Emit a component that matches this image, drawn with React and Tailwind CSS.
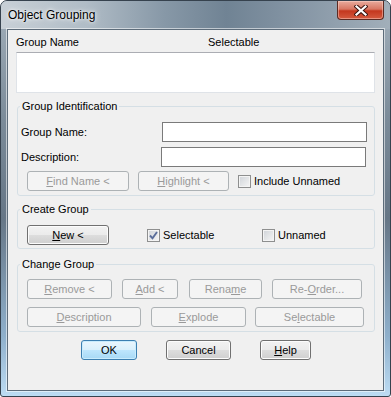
import React from "react";

function Btn({ cls, disabled, def, children }) {
  let look =
    "border-[#707070] bg-[linear-gradient(180deg,#f2f2f2_0%,#ebebeb_50%,#dddddd_51%,#cfcfcf_100%)] shadow-[inset_0_0_0_1px_#fcfcfc] text-black";
  if (disabled)
    look = "border-[#adb2b5] bg-[#f4f4f4] text-[#9a9a9a]";
  if (def)
    look =
      "border-[#3c7fb1] bg-[linear-gradient(180deg,#eaf6fd_0%,#d9f0fc_50%,#bee6fd_51%,#a7d9f5_100%)] shadow-[inset_0_0_0_1px_#c9ecfd] text-black";
  return (
    <div
      className={`h-[20px] shrink-0 rounded-[3px] border flex items-center justify-center ${look} ${cls}`}
    >
      <span>{children}</span>
    </div>
  );
}

function Check({ checked }) {
  return (
    <span className="w-[13px] h-[13px] shrink-0 border border-[#8e8f8f] bg-[linear-gradient(135deg,#cfd3d8_0%,#f6f6f6_100%)] shadow-[inset_0_0_0_1px_#f4f4f4] flex items-center justify-center">
      {checked && (
        <svg width="11" height="11" viewBox="0 0 11 11">
          <path
            d="M2 5.5 L4.5 8.3 L9 2"
            fill="none"
            stroke="#5a6d9a"
            strokeWidth="1.9"
          />
        </svg>
      )}
    </span>
  );
}

function Group({ title, cls, children }) {
  return (
    <fieldset
      className={`ml-[1px] w-[358px] border border-[#d5dfe5] rounded-[3px] ${cls}`}
    >
      <legend className="ml-[2px] px-[2px]">{title}</legend>
      {children}
    </fieldset>
  );
}

export default function App() {
  return (
    <div className="w-[391px] h-[397px] overflow-hidden rounded-t-[7px] rounded-b-[3px] border border-[#36424e] bg-[linear-gradient(180deg,#a3b0bb_0%,#7b8b99_30%,#667686_55%,#8fb0cc_85%,#bddcf3_100%)] flex flex-col font-['Liberation_Sans',Arial,sans-serif] text-[11px] leading-[13px] text-black">
      <div className="h-[28px] shrink-0 flex items-start justify-between bg-[linear-gradient(90deg,#c8d0d7_0%,#b0bcc6_22%,#8798a7_42%,#708394_58%,#8797a6_78%,#a2afba_100%)]">
        <span className="ml-[7px] mt-[7px] text-[12px] leading-[15px] [text-shadow:0_0_6px_#fff,0_0_3px_#fff]">
          Object Grouping
        </span>
        <div className="mr-[6px] w-[47px] h-[19px] border border-t-0 border-[#5c2a22] rounded-b-[4px] bg-[linear-gradient(180deg,#e8ab9d_0%,#d77763_45%,#c4371e_55%,#d45a3f_100%)] shadow-[inset_0_0_0_1px_rgba(255,220,210,0.45)] flex items-center justify-center">
          <svg width="14" height="11" viewBox="0 0 14 11">
            <path
              d="M2.5 1.5 L11.5 9.5 M11.5 1.5 L2.5 9.5"
              stroke="#3b1510"
              strokeWidth="4.2"
              strokeLinecap="square"
            />
            <path
              d="M2.5 1.5 L11.5 9.5 M11.5 1.5 L2.5 9.5"
              stroke="#ffffff"
              strokeWidth="2.2"
              strokeLinecap="square"
            />
          </svg>
        </div>
      </div>

      <div className="mx-[6px] h-[362px] shrink-0 border border-[#5d6c7a] bg-[#f0f0f0] shadow-[0_0_0_1px_rgba(255,255,255,0.55)] px-[8px] pt-[6px] flex flex-col">
        <div className="flex">
          <span className="w-[192px]">Group Name</span>
          <span>Selectable</span>
        </div>
        <div className="mt-[3px] h-[41px] w-[359px] bg-white border border-[#dfe3e8] border-t-[#abadb3]" />

        <Group title="Group Identification" cls="mt-[7px] pb-[4px]">
          <div className="mt-[9px] flex items-center">
            <span className="ml-[3px] w-[141px]">Group Name:</span>
            <div className="w-[205px] h-[20px] bg-white border border-[#7a7a7a]" />
          </div>
          <div className="mt-[5px] flex items-center">
            <span className="ml-[3px] w-[140px]">Description:</span>
            <div className="w-[205px] h-[20px] bg-white border border-[#7a7a7a]" />
          </div>
          <div className="mt-[4px] ml-[9px] flex items-center">
            <Btn cls="w-[102px]" disabled>
              <u>F</u>ind Name &lt;
            </Btn>
            <Btn cls="ml-[9px] w-[91px]" disabled>
              <u>H</u>ighlight &lt;
            </Btn>
            <div className="ml-[9px] flex items-center">
              <Check />
              <span className="ml-[3px]">Include Unnamed</span>
            </div>
          </div>
        </Group>

        <Group title="Create Group" cls="mt-[7px] pb-[3px]">
          <div className="mt-[9px] ml-[9px] flex items-center">
            <Btn cls="w-[82px]">
              <u>N</u>ew &lt;
            </Btn>
            <div className="ml-[38px] w-[115px] flex items-center">
              <Check checked />
              <span className="ml-[3px]">Selectable</span>
            </div>
            <div className="flex items-center">
              <Check />
              <span className="ml-[3px]">Unnamed</span>
            </div>
          </div>
        </Group>

        <Group title="Change Group" cls="mt-[9px] pb-[4px]">
          <div className="mt-[8px] ml-[9px] flex">
            <Btn cls="w-[85px]" disabled>
              <u>R</u>emove &lt;
            </Btn>
            <Btn cls="ml-[10px] w-[56px]" disabled>
              <u>A</u>dd &lt;
            </Btn>
            <Btn cls="ml-[11px] w-[73px]" disabled>
              Rena<u>m</u>e
            </Btn>
            <Btn cls="ml-[10px] w-[90px]" disabled>
              Re-<u>O</u>rder...
            </Btn>
          </div>
          <div className="mt-[8px] ml-[9px] flex">
            <Btn cls="w-[114px]" disabled>
              <u>D</u>escription
            </Btn>
            <Btn cls="ml-[10px] w-[95px]" disabled>
              <u>E</u>xplode
            </Btn>
            <Btn cls="ml-[9px] w-[109px]" disabled>
              Se<u>l</u>ectable
            </Btn>
          </div>
        </Group>

        <div className="mt-[8px] ml-[65px] flex">
          <Btn cls="w-[56px]" def>
            OK
          </Btn>
          <Btn cls="ml-[29px] w-[65px]">Cancel</Btn>
          <Btn cls="ml-[29px] w-[51px]">
            <u>H</u>elp
          </Btn>
        </div>
      </div>
    </div>
  );
}
